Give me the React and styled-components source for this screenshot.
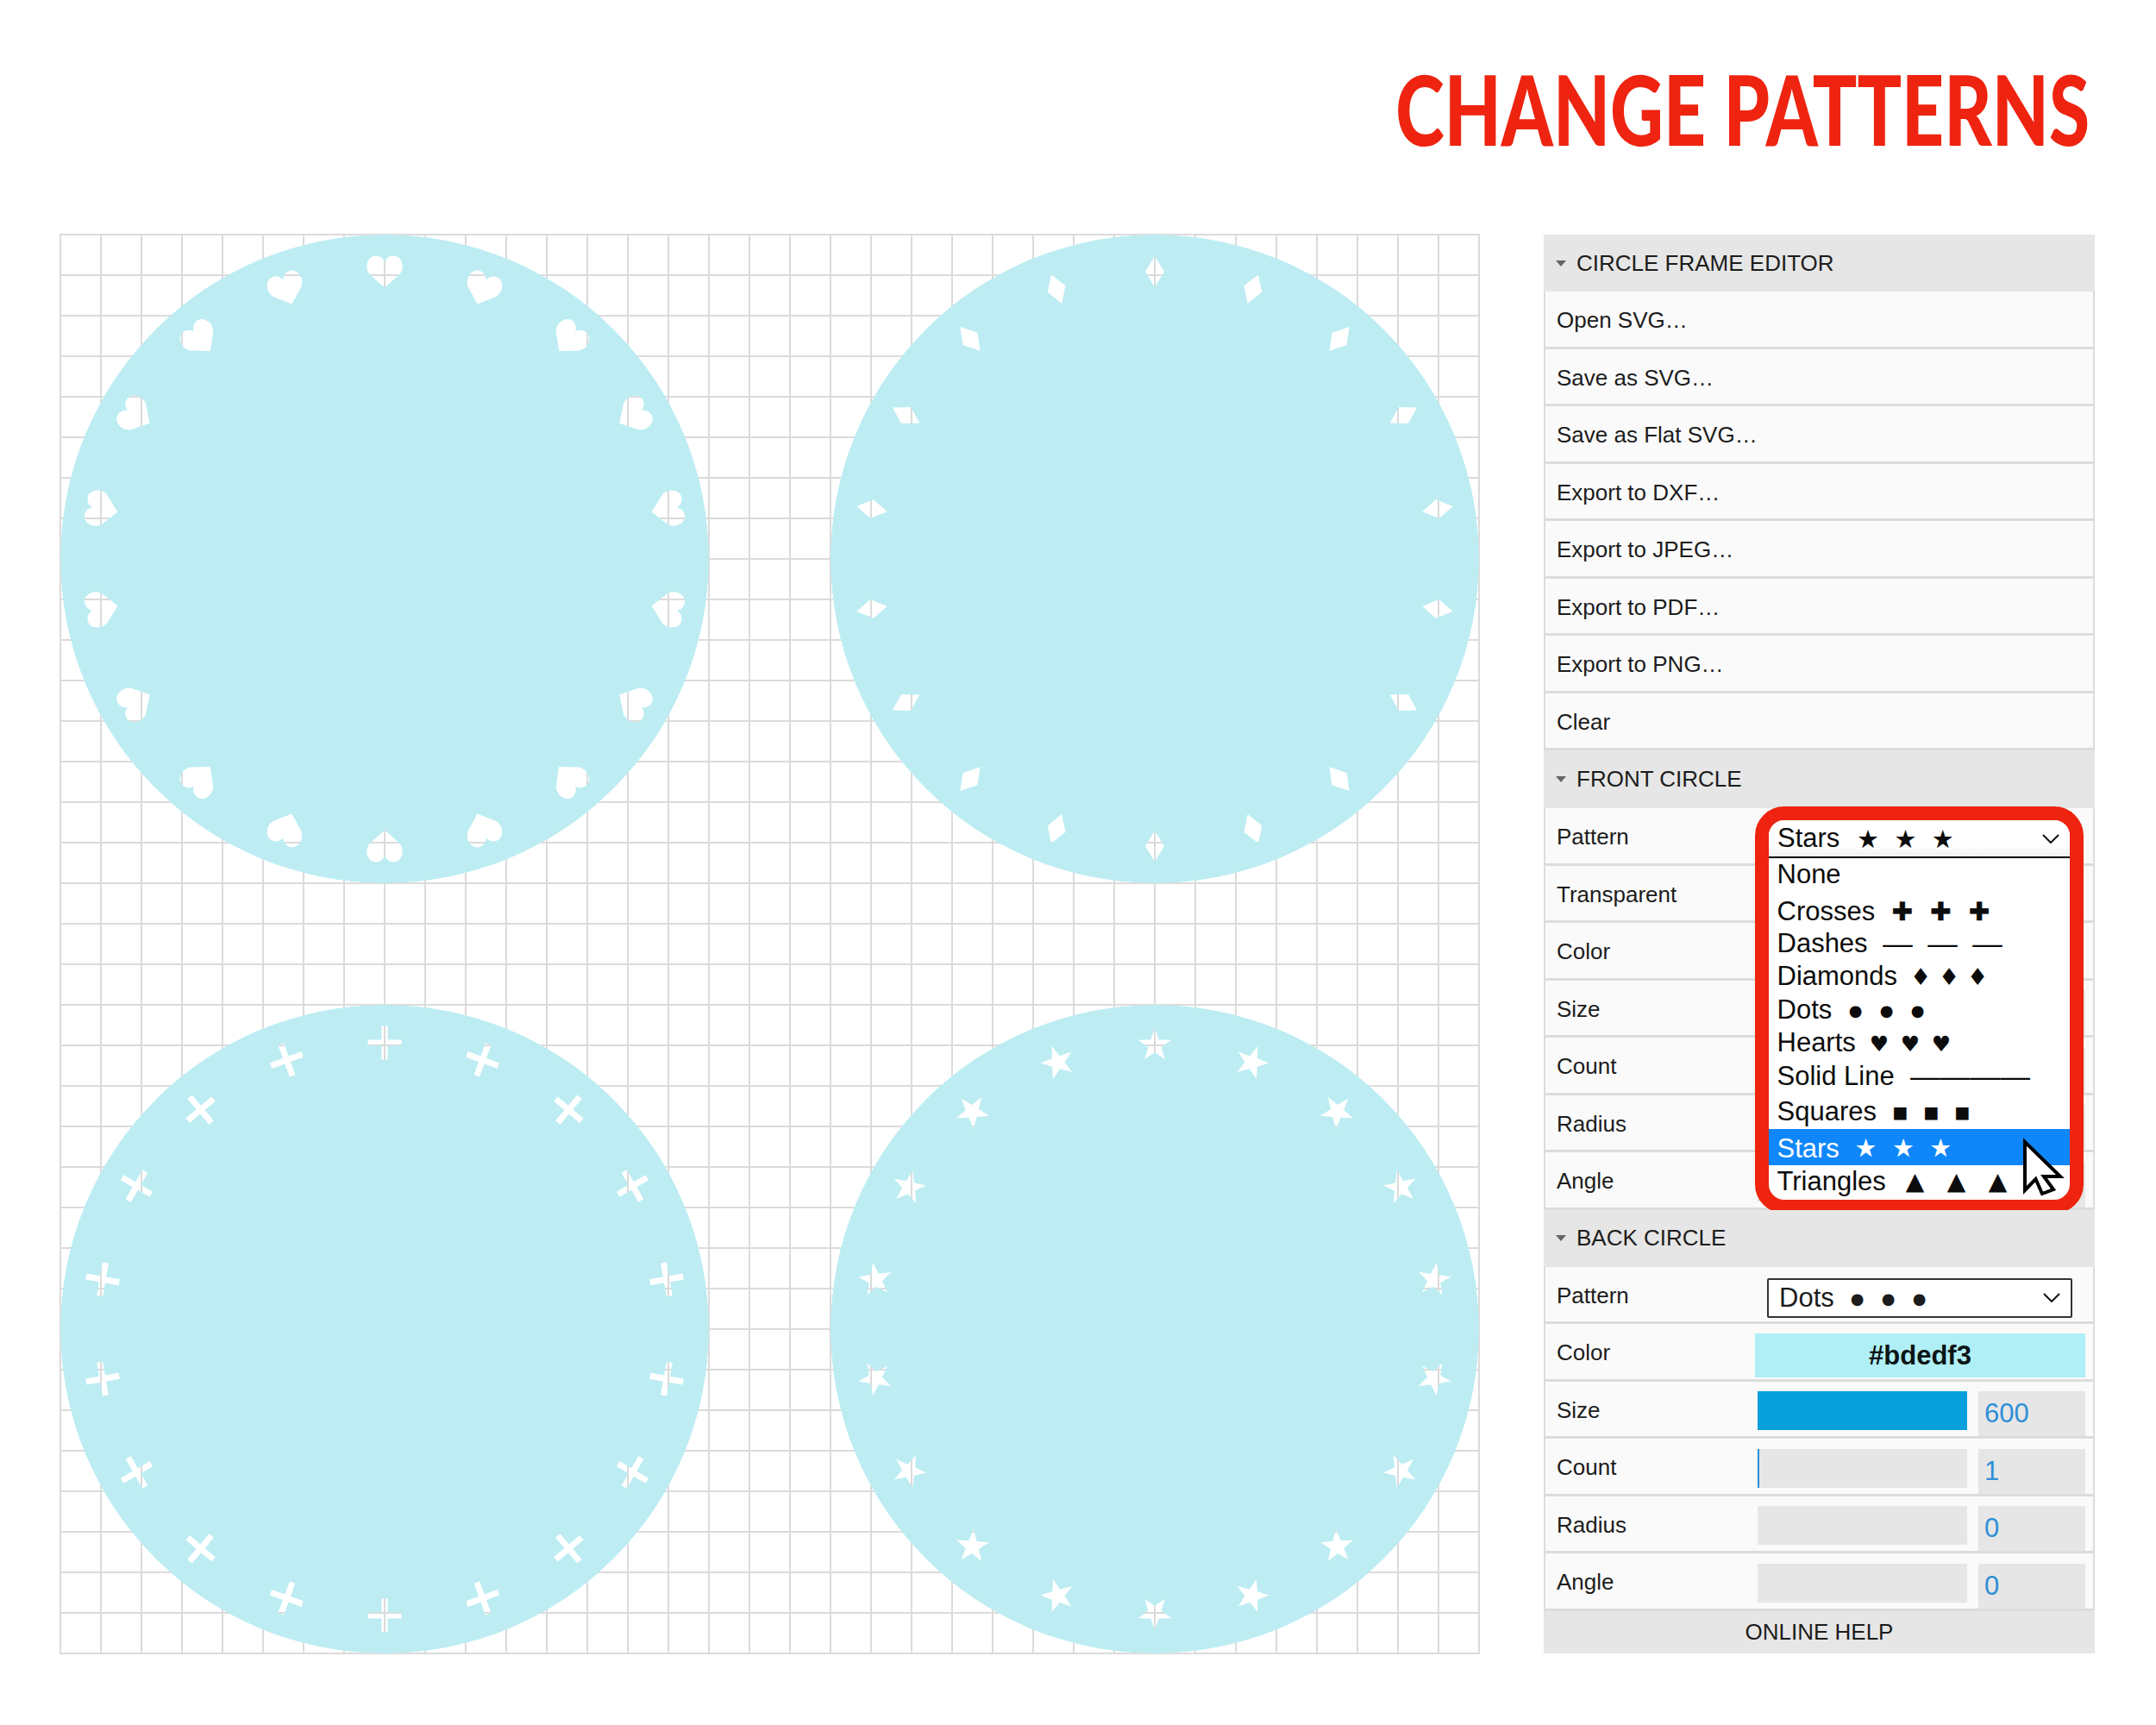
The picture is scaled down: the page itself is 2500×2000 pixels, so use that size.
import React from 'react';
import styled, { createGlobalStyle } from 'styled-components';

const GlobalStyle = createGlobalStyle`
  html, body { margin: 0; padding: 0; background: #fff; }
  body { font-family: "Liberation Sans", Arial, sans-serif; color: #1c1c1c; }
`;

const Page = styled.div`
  width: 2500px;
  height: 2000px;
  box-sizing: border-box;
  padding: 0 71px 0 69px;
`;
const TitleBar = styled.header`
  height: 272px;
  display: flex;
  justify-content: flex-end;
  padding-top: 57px;
  box-sizing: border-box;
`;
const Title = styled.h1`
  margin: 0;
  font-family: Lato, "Open Sans", sans-serif;
  font-weight: 900;
  font-size: 113px;
  line-height: 136px;
  height: 136px;
  color: #ee2410;
  white-space: nowrap;
  transform: scaleX(0.757);
  transform-origin: right center;
  margin-right: 6px;
`;
const Main = styled.main`
  display: flex;
  justify-content: space-between;
  align-items: flex-start;
  margin-top: -1px;
`;
const Canvas = styled.div`
  width: 1647px;
  height: 1647px;
  box-sizing: border-box;
  padding: 1px;
  display: grid;
  grid-template-columns: 752px 752px;
  grid-template-rows: 752px 752px;
  gap: 141px;
  background-image:
    linear-gradient(#dbdbdb 2px, transparent 2px),
    linear-gradient(90deg, #dbdbdb 2px, transparent 2px);
  background-size: 47px 47px;
`;
const Disc = styled.svg`
  display: block;
  width: 752px;
  height: 752px;
`;

const Panel = styled.aside`
  width: 639px;
  margin-top: 1px;
  background: #e6e6e6;
  font-size: 26px;
`;
const Section = styled.section`
  position: relative;
`;
const SectionHead = styled.div`
  height: ${p => p.$h}px;
  display: flex;
  align-items: center;
  padding-left: 14px;
  background: #e6e6e6;
`;
const Caret = styled.span`
  width: 0;
  height: 0;
  margin-right: 12px;
  border-left: 6.5px solid transparent;
  border-right: 6.5px solid transparent;
  border-top: 7px solid #666;
`;
const Row = styled.div`
  height: 66.5px;
  box-sizing: border-box;
  display: flex;
  align-items: center;
  padding: 4px 9px 0 13px;
  background: #fafafa;
  border: 2px solid #dcdcdc;
  border-top: 0;
  border-bottom-width: 3px;
`;
const Label = styled.span`
  width: 230px;
  flex: none;
`;
const SelectBox = styled.div`
  width: 354px;
  height: 46px;
  margin: 5px 0 0 14px;
  box-sizing: border-box;
  display: flex;
  align-items: center;
  justify-content: space-between;
  padding: 0 12px 0 12px;
  background: #fff;
  border: 2px solid #333;
  border-radius: 2px;
  font-size: 31px;
`;
const Swatch = styled.div`
  width: 383px;
  height: 51px;
  margin-top: 6px;
  display: flex;
  align-items: center;
  justify-content: center;
  background: #b0eff5;
  font-size: 31px;
  font-weight: 700;
  color: #0c1516;
`;
const Slider = styled.div`
  width: 243px;
  height: 45px;
  margin: 7.5px 13px 0 3px;
  align-self: flex-start;
  flex: none;
  background: #e6e6e6;
`;
const SliderFill = styled.div`
  height: 100%;
  background: ${p => p.$thin ? '#2e8fd6' : '#08a0dc'};
`;
const Value = styled.div`
  width: 124px;
  height: 52px;
  flex: none;
  align-self: flex-start;
  margin-top: 7.5px;
  box-sizing: border-box;
  padding-left: 7px;
  background: #e6e6e6;
  color: #2e8fd6;
  font-size: 31px;
  line-height: 51px;
`;
const Footer = styled.div`
  height: 49.5px;
  display: flex;
  align-items: center;
  justify-content: center;
  background: #e6e6e6;
`;

const Callout = styled.div`
  position: absolute;
  left: 245px;
  top: 65px;
  width: 381px;
  height: 472px;
  box-sizing: border-box;
  border: 16px solid #ee2410;
  border-radius: 34px;
  background: #fff;
  overflow: hidden;
  font-size: 31px;
  color: #0c0c0c;
`;
const OpenHead = styled.div`
  height: 44px;
  box-sizing: border-box;
  display: flex;
  align-items: center;
  justify-content: space-between;
  padding: 0 12px 0 10px;
  border-bottom: 2px solid #000;
  background: linear-gradient(#fff 70%, #efefef);
`;
const Option = styled.div`
  height: ${p => p.$h}px;
  box-sizing: border-box;
  display: flex;
  align-items: center;
  padding: ${p => p.$top || 0}px 0 0 9.5px;
  background: ${p => p.$active ? '#0f87fb' : 'transparent'};
  color: ${p => p.$active ? '#fff' : 'inherit'};
`;
const Entry = styled.span`
  display: flex;
  align-items: center;
`;
const Name = styled.span`
  width: ${p => p.$w}px;
  flex: none;
`;
const Mark = styled.span`
  width: ${p => p.$pitch}px;
  flex: none;
  text-align: center;
  font-family: ${p => p.$plain ? '"Liberation Sans"' : '"DejaVu Sans"'}, sans-serif;
  font-size: ${p => p.$size}px;
  line-height: 1;
  white-space: nowrap;
  position: relative;
  top: ${p => p.$dy || 0}px;
  -webkit-text-stroke: ${p => p.$bold || 0}px currentColor;
`;
const Chevron = styled.svg`
  width: 20px;
  height: 11px;
  flex: none;
  fill: none;
  stroke: #111;
  stroke-width: 2;
`;
const Pointer = styled.svg`
  position: absolute;
  left: 295px;
  top: 371px;
  width: 48px;
  height: 66px;
  overflow: visible;
`;

const SPOKES = Array.from({ length: 18 }, (_, i) => i * 20);

const starPoints = (outer, inner) =>
  Array.from({ length: 10 }, (_, i) => {
    const r = i % 2 ? inner : outer;
    const a = (i * Math.PI) / 5;
    return `${(r * Math.sin(a)).toFixed(2)},${(-r * Math.cos(a)).toFixed(2)}`;
  }).join(' ');

const shapes = {
  heart: {
    radius: 333,
    draw: <path d="M0 18.5 L-17.5 3 C-20.5 -1 -21 -5 -20.5 -8 C-19.5 -15 -15 -18.5 -10.5 -18.5 C-5 -18.5 -1.5 -15 0 -11 C1.5 -15 5 -18.5 10.5 -18.5 C15 -18.5 19.5 -15 20.5 -8 C21 -5 20.5 -1 17.5 3 Z" />,
  },
  diamond: {
    radius: 333,
    draw: <polygon points="0,-18 11,0 0,18 -11,0" />,
  },
  cross: {
    radius: 332,
    draw: <path d="M-3.5 -19.5 H3.5 V-3.5 H19.5 V3.5 H3.5 V19.5 H-3.5 V3.5 H-19.5 V-3.5 H-3.5 Z" />,
  },
  star: {
    radius: 329,
    draw: <polygon points={starPoints(20, 8)} />,
  },
};

const PatternDisc = ({ kind }) => {
  const { radius, draw } = shapes[kind];
  return (
    <Disc viewBox="-376 -376 752 752">
      <mask id={`holes-${kind}`}>
        <circle r="376" fill="#fff" />
        <g fill="#000">
          {SPOKES.map(angle => (
            <g key={angle} transform={`rotate(${angle}) translate(0 ${-radius})`}>{draw}</g>
          ))}
        </g>
      </mask>
      <circle r="376" fill="#bdedf3" mask={`url(#holes-${kind})`} />
    </Disc>
  );
};

const Marks = ({ glyph, size, pitch, count = 3, plain, dy, bold }) => (
  <>
    {Array.from({ length: count }, (_, i) => (
      <Mark key={i} $size={size} $pitch={pitch} $plain={plain} $dy={dy} $bold={bold}>{glyph}</Mark>
    ))}
  </>
);

const ChevronIcon = () => (
  <Chevron viewBox="0 0 20 11"><polyline points="1,1 10,10 19,1" /></Chevron>
);

const options = [
  { name: 'None', h: 37 },
  { name: 'Crosses', h: 44, top: 6, w: 122.8, glyph: '✚', size: 29, pitch: 44.6, bold: 0.6 },
  { name: 'Dashes', h: 36, w: 114, glyph: '—', size: 34.5, pitch: 52, plain: true },
  { name: 'Diamonds', h: 39, w: 150, glyph: '♦', size: 27, pitch: 33, dy: 1 },
  { name: 'Dots', h: 39, w: 73, glyph: '●', size: 18, pitch: 36, dy: 1 },
  { name: 'Hearts', h: 38, w: 100.5, glyph: '♥', size: 25, pitch: 36, dy: 1 },
  { name: 'Solid Line', h: 40, w: 154.6, glyph: '————', size: 34.75, pitch: 139, count: 1, plain: true },
  { name: 'Squares', h: 41, w: 125, glyph: '■', size: 19, pitch: 36, dy: 1 },
  { name: 'Stars', h: 42, top: 3, w: 81.3, glyph: '★', size: 29, pitch: 43.4, active: true },
  { name: 'Triangles', h: 38, w: 136, glyph: '▲', size: 28, pitch: 48 },
];

const fileActions = ['Open SVG…', 'Save as SVG…', 'Save as Flat SVG…', 'Export to DXF…', 'Export to JPEG…', 'Export to PDF…', 'Export to PNG…', 'Clear'];

const numberRows = [
  { label: 'Size', value: '600', fill: '100%' },
  { label: 'Count', value: '1', fill: '2px', thin: true },
  { label: 'Radius', value: '0', fill: '0' },
  { label: 'Angle', value: '0', fill: '0' },
];

const Head = ({ h, children }) => (
  <SectionHead $h={h}><Caret />{children}</SectionHead>
);

export default function App() {
  return (
    <Page>
      <GlobalStyle />
      <TitleBar><Title>CHANGE PATTERNS</Title></TitleBar>
      <Main>
        <Canvas>
          <PatternDisc kind="heart" />
          <PatternDisc kind="diamond" />
          <PatternDisc kind="cross" />
          <PatternDisc kind="star" />
        </Canvas>
        <Panel>
          <Section>
            <Head h={66}>CIRCLE FRAME EDITOR</Head>
            {fileActions.map(action => <Row key={action}>{action}</Row>)}
          </Section>
          <Section>
            <Head h={67}>FRONT CIRCLE</Head>
            <Row><Label>Pattern</Label></Row>
            <Row><Label>Transparent</Label></Row>
            <Row><Label>Color</Label></Row>
            {numberRows.map(row => (
              <Row key={row.label}>
                <Label>{row.label}</Label>
                <Slider />
                <Value />
              </Row>
            ))}
            <Callout>
              <OpenHead>
                <Entry>
                  <Name $w={83.3}>Stars</Name>
                  <Marks glyph="★" size={29} pitch={43.4} dy={1} />
                </Entry>
                <ChevronIcon />
              </OpenHead>
              {options.map(o => (
                <Option key={o.name} $h={o.h} $top={o.top} $active={o.active}>
                  {o.glyph ? <Name $w={o.w}>{o.name}</Name> : o.name}
                  {o.glyph && <Marks glyph={o.glyph} size={o.size} pitch={o.pitch} count={o.count} plain={o.plain} dy={o.dy} bold={o.bold} />}
                </Option>
              ))}
              <Pointer viewBox="0 0 48 66">
                <polygon points="2,2 2,58 14.5,45 22,62 35,57 24,42 43,42" fill="#fff" stroke="#000" strokeWidth="4" strokeLinejoin="miter" />
              </Pointer>
            </Callout>
          </Section>
          <Section>
            <Head h={66}>BACK CIRCLE</Head>
            <Row>
              <Label>Pattern</Label>
              <SelectBox>
                <Entry>
                  <Name $w={72.7}>Dots</Name>
                  <Marks glyph="●" size={18} pitch={36} dy={1} />
                </Entry>
                <ChevronIcon />
              </SelectBox>
            </Row>
            <Row>
              <Label>Color</Label>
              <Swatch>#bdedf3</Swatch>
            </Row>
            {numberRows.map(row => (
              <Row key={row.label}>
                <Label>{row.label}</Label>
                <Slider><SliderFill $thin={row.thin} style={{ width: row.fill }} /></Slider>
                <Value>{row.value}</Value>
              </Row>
            ))}
          </Section>
          <Footer>ONLINE HELP</Footer>
        </Panel>
      </Main>
    </Page>
  );
}
